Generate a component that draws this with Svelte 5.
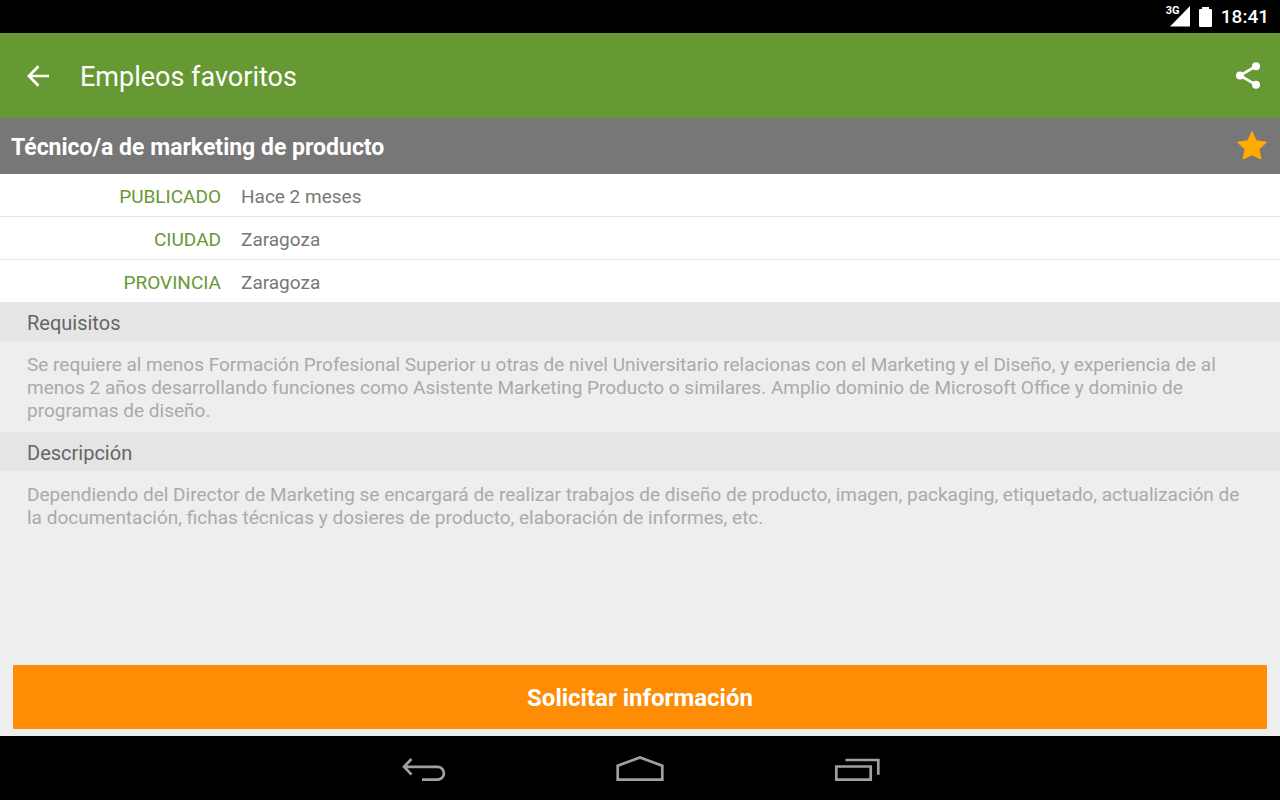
<script lang="ts">
    let favorite = $state(true);

    const time = '18:41';

    const job = {
        title: 'Técnico/a de marketing de producto',
        details: [
            { label: 'Publicado', value: 'Hace 2 meses' },
            { label: 'Ciudad', value: 'Zaragoza' },
            { label: 'Provincia', value: 'Zaragoza' },
        ],
        sections: [
            {
                heading: 'Requisitos',
                text: 'Se requiere al menos Formación Profesional Superior u otras de nivel Universitario relacionas con el Marketing y el Diseño, y experiencia de al menos 2 años desarrollando funciones como Asistente Marketing Producto o similares. Amplio dominio de Microsoft Office y dominio de programas de diseño.',
            },
            {
                heading: 'Descripción',
                text: 'Dependiendo del Director de Marketing se encargará de realizar trabajos de diseño de producto, imagen, packaging, etiquetado, actualización de la documentación, fichas técnicas y dosieres de producto, elaboración de informes, etc.',
            },
        ],
    };
</script>

<div class="screen">
    <div class="status-bar">
        <div class="signal">
            <span class="network">3G</span>
            <svg width="20" height="21" viewBox="0 0 20 21" aria-hidden="true">
                <path d="M20 0v20.500H0z" fill="#fff" />
            </svg>
        </div>
        <svg width="13" height="20" viewBox="0 0 13 20" aria-hidden="true">
            <path d="M3 0h7v2h2q1 0 1 1v16q0 1-1 1H1q-1 0-1-1V3q0-1 1-1h2z" fill="#fff" />
        </svg>
        <span class="time">{time}</span>
    </div>

    <header class="app-bar">
        <button class="icon-button" aria-label="Volver">
            <svg width="22" height="22" viewBox="0 0 22 22" fill="none" stroke="#fff" stroke-width="2.700">
                <path d="M11.500 1.200L1.900 11l9.600 9.800M2 11h20" />
            </svg>
        </button>
        <h1>Empleos favoritos</h1>
        <button class="icon-button" aria-label="Compartir">
            <svg width="26" height="28" viewBox="0 0 26 28">
                <path d="M21 4.200L5 13.500l16 9.300" fill="none" stroke="#fff" stroke-width="2.700" />
                <circle cx="21" cy="4.200" r="4" fill="#fff" />
                <circle cx="5" cy="13.500" r="4" fill="#fff" />
                <circle cx="21" cy="22.800" r="4" fill="#fff" />
            </svg>
        </button>
    </header>

    <main>
        <div class="job-title">
            <h2>{job.title}</h2>
            <button
                class="icon-button"
                aria-label="Favorito"
                aria-pressed={favorite}
                onclick={() => (favorite = !favorite)}
            >
                <svg width="32" height="30" viewBox="0 1 32 30">
                    <path
                        d="M16 1.500l4.200 9.300 10.300 1.400-7.500 7 2 9.800L16 24.800 7 29l2-9.800-7.500-7 10.300-1.400z"
                        fill={favorite ? '#ffab00' : 'none'}
                        stroke="#ffab00"
                        stroke-linejoin="round"
                    />
                </svg>
            </button>
        </div>

        <dl class="details">
            {#each job.details as detail}
                <div class="detail">
                    <dt>{detail.label}</dt>
                    <dd>{detail.value}</dd>
                </div>
            {/each}
        </dl>

        {#each job.sections as section}
            <section>
                <h3>{section.heading}</h3>
                <p>{section.text}</p>
            </section>
        {/each}
    </main>

    <div class="action">
        <button class="request-button">Solicitar información</button>
    </div>

    <nav class="nav-bar" aria-label="Sistema">
        <button class="nav-button" aria-label="Atrás">
            <svg width="44" height="26" viewBox="0 0 44 26">
                <path d="M9.500 4L2 11.800l7.500 7.800M2 11.800h33.500a6.400 6.400 0 0 1 0 12.900H20" />
            </svg>
        </button>
        <button class="nav-button" aria-label="Inicio">
            <svg width="48" height="26" viewBox="0 0 48 26">
                <path d="M1.700 24.700V10.700L24 2.500l22.300 8.200v14z" />
            </svg>
        </button>
        <button class="nav-button" aria-label="Recientes">
            <svg width="48" height="26" viewBox="0 0 48 26">
                <path d="M4.300 11.500h34.400v13.200H4.300zM13.500 5h32.800v14.700" />
            </svg>
        </button>
    </nav>
</div>

<style>
    :global(body) {
        margin: 0;
        background-color: #eee;
    }
    .screen {
        display: flex;
        flex-direction: column;
        min-height: 100vh;
        font-family: Roboto, sans-serif;
        background-color: #eee;
    }
    h1,
    h2,
    h3,
    p,
    dl,
    dd {
        margin: 0;
    }
    button {
        padding: 0;
        border: none;
        background: none;
        font-family: inherit;
        cursor: pointer;
    }
    svg {
        display: block;
    }
    .status-bar {
        display: flex;
        align-items: center;
        justify-content: flex-end;
        gap: 9px;
        height: 33px;
        padding: 0 11px;
        color: #fff;
        background-color: #000;
    }
    .signal {
        position: relative;
    }
    .network {
        position: absolute;
        top: -1px;
        left: -4px;
        font-size: 11px;
        line-height: 12px;
        font-weight: 700;
    }
    .time {
        font-size: 19px;
        font-weight: 500;
    }
    .app-bar {
        display: flex;
        align-items: center;
        height: 85px;
        padding: 0 12px 0 18px;
        background-color: #693;
    }
    .icon-button {
        display: flex;
        flex: none;
        align-items: center;
        justify-content: center;
        width: 40px;
        height: 40px;
    }
    h1 {
        flex: 1;
        margin-left: 22px;
        padding-top: 2px;
        font-size: 27px;
        font-weight: 400;
        color: #fff;
    }
    .job-title {
        display: flex;
        align-items: center;
        justify-content: space-between;
        height: 56px;
        padding: 0 8px 0 11px;
        background-color: #777;
    }
    h2 {
        padding-top: 2px;
        font-size: 23px;
        font-weight: 700;
        color: #fff;
    }
    .details {
        background-color: #fff;
    }
    .detail {
        display: flex;
        gap: 20px;
        padding: 11px 0 7px;
        font-size: 19px;
        line-height: 24px;
    }
    .detail + .detail {
        border-top: 1px solid #e5e5e5;
    }
    dt {
        width: 221px;
        text-align: right;
        text-transform: uppercase;
        color: #693;
    }
    dd {
        flex: 1;
        color: #777;
    }
    h3 {
        padding: 9px 27px 6px;
        font-size: 20px;
        line-height: 24px;
        font-weight: 400;
        color: #666;
        background-color: #e5e5e5;
    }
    p {
        padding: 12px 27px 10px;
        font-size: 19px;
        line-height: 23px;
        color: #aaa;
    }
    .action {
        margin-top: auto;
        padding: 7px 13px;
    }
    .request-button {
        width: 100%;
        height: 64px;
        padding-top: 2px;
        border-radius: 1px;
        font-size: 24px;
        font-weight: 700;
        color: #fff;
        background-color: #ff8c05;
    }
    .nav-bar {
        display: flex;
        justify-content: center;
        background-color: #000;
    }
    .nav-button {
        display: flex;
        align-items: center;
        justify-content: center;
        width: 216px;
        height: 64px;
    }
    .nav-button path {
        fill: none;
        stroke: #a0a0a0;
        stroke-width: 2.7;
    }
</style>
